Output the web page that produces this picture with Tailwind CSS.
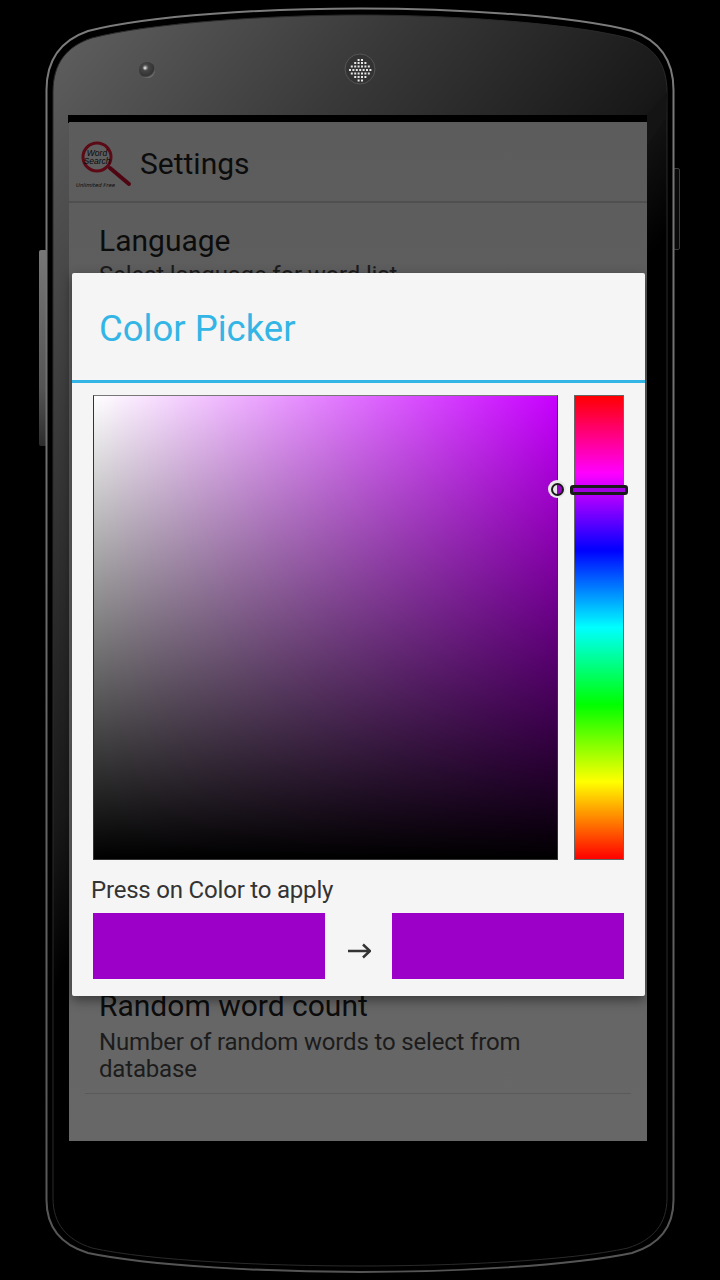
<!DOCTYPE html>
<html lang="en">
  <head>
    <meta charset="UTF-8" />
    <meta name="viewport" content="width=device-width, initial-scale=1.0" />
    <title>Color Picker</title>
    <script src="https://cdn.jsdelivr.net/npm/@tailwindcss/browser@4"></script>
  </head>
  <body class="bg-black">
    <div class="relative w-[720px] h-[1280px] overflow-hidden bg-black font-['Roboto',sans-serif]">
      <!-- phone body -->
      <svg class="absolute inset-0" width="720" height="1280" viewBox="0 0 720 1280" fill="none">
        <defs>
          <linearGradient id="bezel" gradientUnits="userSpaceOnUse" x1="60" y1="40" x2="700" y2="560">
            <stop offset="0" stop-color="#5e5e5e" />
            <stop offset="0.3" stop-color="#393939" />
            <stop offset="0.6" stop-color="#181818" />
            <stop offset="0.72" stop-color="#000" />
          </linearGradient>
          <linearGradient id="rim" x1="0" x2="0" y1="0" y2="1">
            <stop offset="0" stop-color="#7c7c7c" />
            <stop offset="1" stop-color="#555" />
          </linearGradient>
          <linearGradient id="sideBtn" x1="0" x2="0" y1="0" y2="1">
            <stop offset="0" stop-color="#777" />
            <stop offset="0.7" stop-color="#555" />
            <stop offset="1" stop-color="#2c2c2c" />
          </linearGradient>
          <radialGradient id="lens" cx="0.4" cy="0.35" r="0.7">
            <stop offset="0" stop-color="#aaa" />
            <stop offset="0.3" stop-color="#444" />
            <stop offset="0.75" stop-color="#333" />
            <stop offset="1" stop-color="#8a8a8a" />
          </radialGradient>
        </defs>
        <rect x="39" y="250" width="8" height="196" rx="2" fill="url(#sideBtn)" />
        <rect x="673.5" y="168.5" width="6" height="81" rx="1.5" fill="#0a0a0a" stroke="#3d3d3d" />
        <path
          d="M46.5 90C46.500 58 62 40 88 31C150 15 270 8.500 360 8.500C450 8.500 570 15 632 31C658 40 673.500 58 673.500 90L673.500 1200C673.500 1228 658 1245 632 1253C570 1266 450 1272 360 1272C270 1272 150 1266 88 1253C62 1245 46.500 1228 46.500 1200Z"
          fill="#000"
          stroke="url(#rim)"
          stroke-width="2"
        />
        <path
          d="M53 92C53 63 67 46 92 38C150 23 270 15 360 15C450 15 570 23 628 38C653 46 667 63 667 92L667 1198C667 1224 653 1240 628 1248C570 1261 450 1266 360 1266C270 1266 150 1261 92 1248C67 1240 53 1224 53 1198Z"
          fill="url(#bezel)"
          stroke="#2a2a2a"
        />
        <path d="M647 145L666 118L667 92L647 115Z" fill="#141414" />
        <rect x="68" y="115" width="579" height="8" fill="#000" />
        <circle cx="147" cy="70" r="8" fill="url(#lens)" />
        <circle cx="145" cy="68" r="1.500" fill="#ccc" />
        <circle cx="360" cy="69" r="15" fill="#333" stroke="#555" />
        <g stroke="#e8e8e8" stroke-width="2" stroke-dasharray="2 1.400">
          <line x1="357.600" x2="364" y1="60" y2="60" />
          <line x1="354.200" x2="367.400" y1="63" y2="63" />
          <line x1="350.800" x2="370.800" y1="66.500" y2="66.500" />
          <line x1="349" x2="372" y1="70" y2="70" />
          <line x1="350.800" x2="370.800" y1="73.500" y2="73.500" />
          <line x1="354.200" x2="367.400" y1="77" y2="77" />
          <line x1="357.600" x2="364" y1="80.500" y2="80.500" />
        </g>
      </svg>

      <!-- screen, dimmed behind the dialog -->
      <div class="absolute left-[69px] top-[122px] w-[578px] h-[1019px] flex flex-col bg-linear-to-b from-[#5c5c5c] to-[#676767]">
        <header class="h-[81px] shrink-0 flex items-center border-b-2 border-[#4f4f4f] pt-[5px]">
          <svg class="ml-[6px] shrink-0" width="60" height="64" viewBox="0 0 60 64">
            <line x1="35" y1="36" x2="54" y2="52" stroke="#4f0612" stroke-width="4" stroke-linecap="round" />
            <circle cx="22" cy="25" r="14" fill="#5f5f5f" stroke="#5b0a16" stroke-width="3" />
            <text x="22" y="23.500" text-anchor="middle" font-family="Liberation Sans" font-style="italic" font-size="8.500" fill="#0a0a0a">Word</text>
            <text x="22" y="32" text-anchor="middle" font-family="Liberation Sans" font-style="italic" font-size="8.500" fill="#0a0a0a">Search</text>
            <text x="1" y="55" font-family="DejaVu Sans" font-size="5.300" font-style="italic" fill="#0a0a0a">Unlimited Free</text>
          </svg>
          <h1 class="ml-[5px] text-[30px] leading-none text-[#0c0c0c]">Settings</h1>
        </header>
        <div class="px-[30px] pt-[21px]">
          <p class="text-[30px] leading-[34px] text-[#0c0c0c]">Language</p>
          <p class="mt-[3px] text-[24px] leading-[28px] tracking-[-0.17px] text-[#1c1c1c]">Select language for word list</p>
        </div>
        <div class="mt-auto">
          <div class="px-[30px] pb-[10px]">
            <p class="text-[30px] leading-[34px] text-[#0c0c0c]">Random word count</p>
            <p class="mt-[6px] text-[24px] leading-[27px] tracking-[-0.17px] text-[#1c1c1c]">Number of random words to select from database</p>
          </div>
          <div class="mx-[16px] h-px bg-[#5a5a5a]"></div>
          <div class="h-[47px]"></div>
        </div>
      </div>

      <!-- dialog -->
      <div class="absolute left-[72px] top-[273px] w-[573px] h-[723px] bg-[#f5f5f5] rounded-[2px] shadow-[0_4px_12px_rgba(0,0,0,0.45)]">
        <div class="h-[110px] border-b-[3px] border-[#33b5e5] flex items-center pl-[27px] pt-[6px]">
          <h2 class="text-[36.5px] leading-none text-[#33b5e5]">Color Picker</h2>
        </div>
        <div class="relative h-[466px] mt-[12px] ml-[21px]">
          <div class="flex gap-[16px]">
            <div class="w-[465px] h-[465px] border border-[#333] border-t-[#777] bg-[#c800ff]">
              <div class="w-full h-full bg-linear-to-r from-white to-white/0">
                <div class="w-full h-full bg-linear-to-t from-black to-black/0"></div>
              </div>
            </div>
            <div class="w-[50px] h-[465px] border border-[#666] bg-[linear-gradient(to_bottom,#f00_0%,#f0f_16.67%,#00f_33.33%,#0ff_50%,#0f0_66.67%,#ff0_83.33%,#f00_100%)]"></div>
          </div>
          <!-- markers -->
          <div class="absolute left-[455px] top-[85px] w-[18px] h-[18px] rounded-full bg-[#e8e8e8] flex items-center justify-center">
            <div class="w-[13px] h-[13px] rounded-full border-[2px] border-[#1a1a1a] bg-linear-to-r from-[#e8e8e8] from-50% to-[#9c00c8] to-50%"></div>
          </div>
          <div class="absolute left-[477px] top-[90px] w-[58px] h-[10px] rounded-[3px] border-[3px] border-[#1a1a1a] bg-[#a000e0]"></div>
        </div>
        <p class="ml-[19px] mt-[14px] text-[24px] leading-[30px] tracking-[-0.2px] text-[#333]">Press on Color to apply</p>
        <div class="ml-[21px] mt-[8px] flex items-center w-[531px]">
          <div class="w-[232px] h-[66px] bg-[#9c00c8]"></div>
          <div class="flex-1 flex justify-center pt-[9px]">
            <svg width="24" height="16" viewBox="0 0 24 16" fill="none" stroke="#333" stroke-width="2.500">
              <path d="M1 8H23M16 1.500L23 8L16 14.500" />
            </svg>
          </div>
          <div class="w-[232px] h-[66px] bg-[#9c00c8]"></div>
        </div>
      </div>
    </div>
  </body>
</html>
